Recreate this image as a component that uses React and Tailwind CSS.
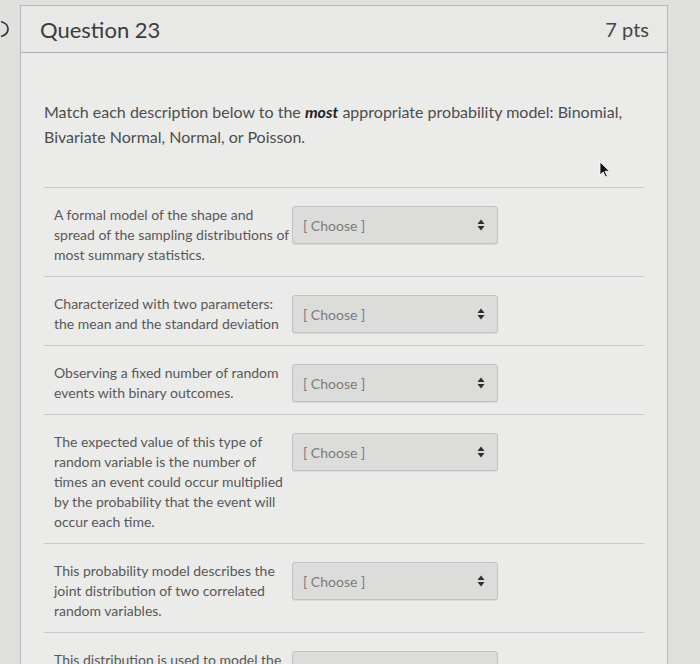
import React from "react";

const rows = [
  {
    text: "A formal model of the shape and spread of the sampling distributions of most summary statistics.",
  },
  { text: "Characterized with two parameters: the mean and the standard deviation" },
  { text: "Observing a fixed number of random events with binary outcomes." },
  {
    text: "The expected value of this type of random variable is the number of times an event could occur multiplied by the probability that the event will occur each time.",
  },
  { text: "This probability model describes the joint distribution of two correlated random variables." },
  { text: "This distribution is used to model the number of times than some event occurs in a fixed interval." },
];

function SortArrows() {
  return (
    <svg width="8" height="12" viewBox="0 0 8 12" className="shrink-0">
      <path d="M4 0.5 L7.5 5 L0.5 5 Z" fill="#2e2e2e" />
      <path d="M4 11.5 L7.5 7 L0.5 7 Z" fill="#2e2e2e" />
    </svg>
  );
}

function ChooseSelect() {
  return (
    <div className="mt-px flex h-[38px] w-[206px] shrink-0 items-center justify-between rounded-[3px] border border-[#c2c2c2] bg-[#dcdcdb] pl-[10px] pr-[12px] shadow-[0_1px_1px_rgba(0,0,0,0.08)]">
      <span className="text-[14px] text-[#7b7b7b]">[ Choose ]</span>
      <SortArrows />
    </div>
  );
}

function MatchRow({ text }) {
  return (
    <div className="flex items-start border-t border-[#cacaca] px-[10px] pt-[17px] pb-[11px]">
      <p className="w-[238px] shrink-0 text-[14px] leading-[20px] text-[#585858]">{text}</p>
      <ChooseSelect />
    </div>
  );
}

export default function App() {
  return (
    <div
      className="relative h-[664px] w-[700px] overflow-hidden bg-[#e0e0df]"
      style={{ fontFamily: "Lato, 'Open Sans', sans-serif" }}
    >
      {/* collapse chevron at the left edge */}
      <svg width="10" height="18" viewBox="0 0 10 18" className="absolute left-0 top-[20px]">
        <path d="M1 1.5 C6 3 8 6 8 9 C8 12 6 15 1 16.5" fill="none" stroke="#3a3a3a" strokeWidth="1.8" />
      </svg>

      <div className="ml-[20px] mt-[5px] w-[648px] border border-[#b8b8b8] bg-[#ebebea]">
        <div className="flex h-[47px] items-center justify-between border-b border-[#aeaeae] bg-[#e8e8e7] pl-[19px] pr-[18px]">
          <h2 className="text-[22px] text-[#3b3b3b]">Question 23</h2>
          <span className="text-[20px] text-[#444]">7 pts</span>
        </div>

        <div className="relative px-[23px] pt-[46px]">
          <p className="mb-[38px] pr-[20px] text-[16px] leading-[25px] text-[#4d4d4d]">
            Match each description below to the <strong className="font-bold italic text-[#222]">most</strong>{" "}
            appropriate probability model: Binomial, Bivariate Normal, Normal, or Poisson.
          </p>

          {rows.map((r, i) => (
            <MatchRow key={i} text={r.text} />
          ))}

          {/* mouse pointer */}
          <svg width="12" height="17" viewBox="0 0 12 17" className="absolute left-[578px] top-[108px]">
            <path d="M1 1 L1 14 L4.2 11 L6.6 16 L8.4 15.2 L6 10.3 L10.5 10.3 Z" fill="#111" stroke="#fff" strokeWidth="0.8" />
          </svg>
        </div>
      </div>
    </div>
  );
}
